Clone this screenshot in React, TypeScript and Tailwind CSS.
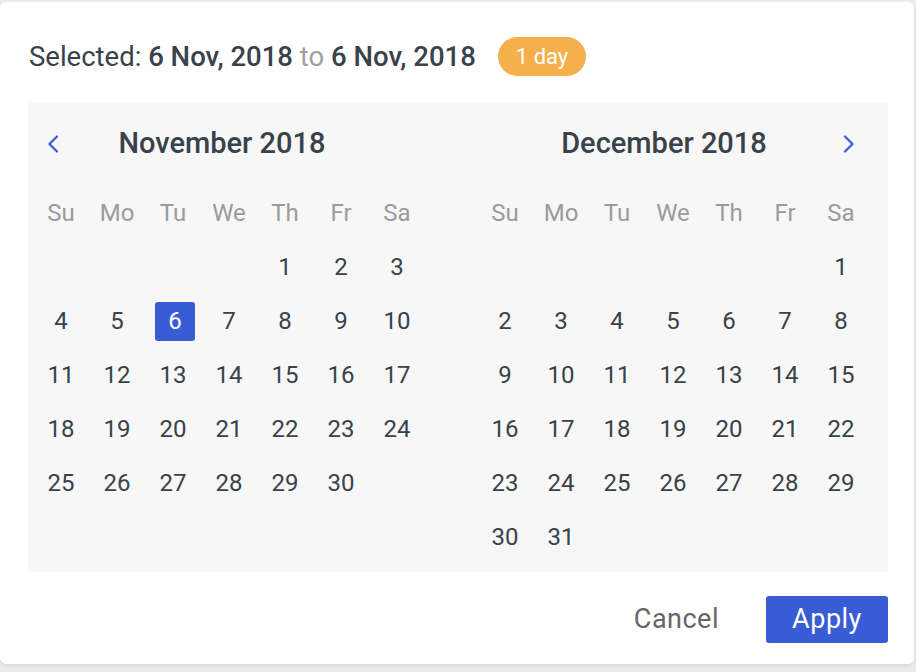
const weekdays = ["Su", "Mo", "Tu", "We", "Th", "Fr", "Sa"];

const novDays: (number | null)[] = [null, null, null, null, 1, 2, 3, ...Array.from({ length: 27 }, (_, i) => i + 4)];
const decDays: (number | null)[] = [null, null, null, null, null, null, 1, ...Array.from({ length: 30 }, (_, i) => i + 2)];

const Chevron = ({ dir }: { dir: "left" | "right" }) => (
  <svg width="12" height="18" viewBox="0 0 12 18" fill="none" stroke="currentColor" strokeWidth="2.2" strokeLinecap="round" strokeLinejoin="round">
    {dir === "left" ? <polyline points="10,1.5 2.5,9 10,16.5" /> : <polyline points="2,1.5 9.5,9 2,16.5" />}
  </svg>
);

const MonthGrid = ({ days, selected }: { days: (number | null)[]; selected?: number }) => (
  <div className="grid grid-cols-[repeat(7,56px)]">
    {weekdays.map((w) => (
      <div key={w} className="h-[54px] flex items-center justify-center text-[24px] text-[#9b9b9b]">
        {w}
      </div>
    ))}
    {days.map((d, i) => (
      <div key={i} className="h-[54px] flex items-center justify-center">
        {d !== null &&
          (d === selected ? (
            <span className="ml-[4px] w-10 h-[39px] rounded-[3px] bg-[#3a5bd6] text-white flex items-center justify-center text-[24px]">{d}</span>
          ) : (
            <span className="text-[24px] text-[#39424a]">{d}</span>
          ))}
      </div>
    ))}
  </div>
);

export default function App() {
  return (
    <div className="w-[916px] h-[672px] bg-[#e9eceb] pt-[2px] font-['Roboto',sans-serif]">
      <div className="w-[914px] h-[662px] bg-white rounded-[6px] shadow-[0_2px_4px_rgba(0,0,0,0.08)] pt-[35px]">
        {/* Selected range */}
        <div className="h-[39px] flex items-center pl-[29px] text-[27.5px] text-[#39424a]">
          <span>Selected:&nbsp;</span>
          <span className="font-medium">6 Nov, 2018</span>
          <span className="text-[#a0a0a0]">&nbsp;to&nbsp;</span>
          <span className="font-medium">6 Nov, 2018</span>
          <span className="ml-[22px] h-[39px] px-[18px] rounded-full bg-[#f5b04b] text-white text-[22px] flex items-center">1 day</span>
        </div>

        {/* Calendars */}
        <div className="mt-[26px] ml-[28px] w-[860px] h-[470px] bg-[#f7f7f7] rounded-[4px] pt-[22px] pl-[5px] flex gap-[52px]">
          <div className="w-[392px]">
            <div className="h-10 flex items-center">
              <button className="w-10 flex justify-center text-[#3a5bd6]">
                <Chevron dir="left" />
              </button>
              <div className="flex-1 text-center text-[29px] font-medium text-[#39424a] pr-[54px]">November 2018</div>
            </div>
            <div className="mt-[22px]">
              <MonthGrid days={novDays} selected={6} />
            </div>
          </div>
          <div className="w-[392px]">
            <div className="h-10 flex items-center">
              <div className="flex-1 text-center text-[29px] font-medium text-[#39424a] pl-[22px]">December 2018</div>
              <button className="w-10 flex justify-center text-[#3a5bd6]">
                <Chevron dir="right" />
              </button>
            </div>
            <div className="mt-[22px]">
              <MonthGrid days={decDays} />
            </div>
          </div>
        </div>

        {/* Footer */}
        <div className="mt-[24px] w-[888px] flex justify-end items-center gap-[47px]">
          <button className="text-[27px] text-[#666] tracking-[0.5px]">Cancel</button>
          <button className="w-[122px] h-[47px] rounded-[3px] bg-[#3a5bd6] text-white text-[27px] tracking-[0.5px]">Apply</button>
        </div>
      </div>
    </div>
  );
}
